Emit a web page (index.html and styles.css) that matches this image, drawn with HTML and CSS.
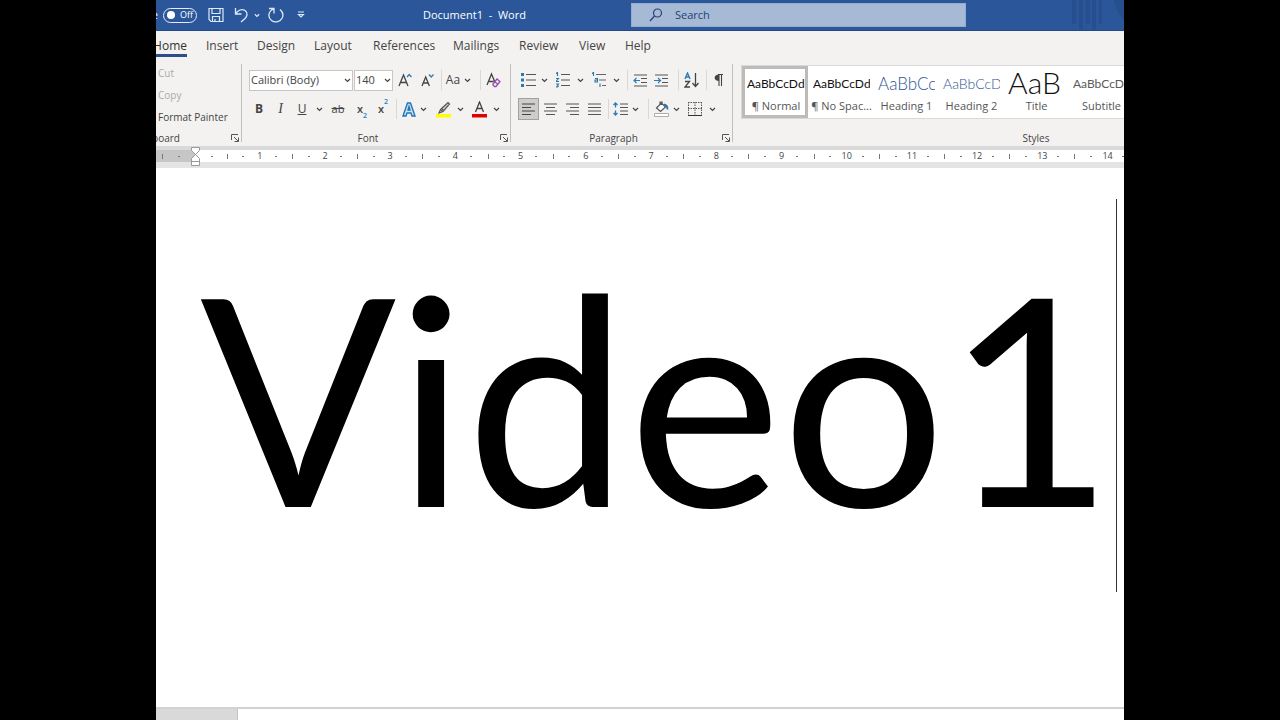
FILE: index.html
```html
<!DOCTYPE html>
<html lang="en">
<head>
<meta charset="utf-8">
<title>Document1 - Word</title>
<link rel="stylesheet" href="styles.css">
</head>
<body>
<svg class="defs" aria-hidden="true">
  <symbol id="chev" viewBox="0 0 7 5"><path d="M1 1l2.500 2.500L6 1" fill="none" stroke="#444" stroke-width="1.200"/></symbol>
  <symbol id="launch" viewBox="0 0 8 8"><path d="M.5 6V.5H7M3 3l4 4M7.500 3.500v4h-4" fill="none" stroke="#555"/></symbol>
</svg>
<div class="window">
  <header class="titlebar">
    <div class="quick">
      <label class="autosave" for="autosave">AutoSave</label>
      <button class="toggle" id="autosave" type="button"><span class="knob"></span>Off</button>
      <button class="icon" type="button" aria-label="Save"><svg width="16" height="16" viewBox="0 0 16 16"><path d="M1 1.500h14v13H3l-2-2zM4 1.500v5h8v-5M4.500 14.500v-5h7v5M7 12v2" fill="none" stroke="#dce9f8" stroke-width="1.200"/></svg></button>
      <button class="icon undo" type="button" aria-label="Undo"><svg width="15" height="16" viewBox="0 0 15 16"><path d="M1.500 1v6h6M1.500 7C4 3 8 1.500 11 3.500c3.500 2.500 2 6 0 8L7 15" fill="none" stroke="#dce9f8" stroke-width="1.300"/></svg></button>
      <button class="icon mini" type="button" aria-label="Undo list"><svg width="6" height="5" viewBox="0 0 7 5"><path d="M1 1l2.500 2.500L6 1" fill="none" stroke="#dce9f8" stroke-width="1.400"/></svg></button>
      <button class="icon redo" type="button" aria-label="Redo"><svg width="16" height="16" viewBox="0 0 16 16"><path d="M1 1.500h5v5M5.500 2C0 4.500-.5 10.500 3.500 13.500c4 3 9 .8 10.700-2.500 1.500-3.500.3-6.500-2.200-8.500" fill="none" stroke="#dce9f8" stroke-width="1.300"/></svg></button>
      <button class="icon" type="button" aria-label="Customize toolbar"><svg width="8" height="8" viewBox="0 0 8 8"><path d="M1 1h6M1.500 3.500L4 6l2.500-2.500z" fill="none" stroke="#dce9f8" stroke-width="1.100"/></svg></button>
    </div>
    <h1 class="title">Document1&nbsp; -&nbsp; Word</h1>
    <label class="search">
      <svg width="14" height="14" viewBox="0 0 14 14"><circle cx="8.500" cy="5" r="4" fill="none" stroke="#22437b" stroke-width="1.200"/><path d="M5.500 8L1 13" stroke="#22437b" stroke-width="1.300"/></svg>
      <input type="text" placeholder="Search" aria-label="Search">
    </label>
    <svg class="pattern" width="54" height="31" viewBox="0 0 54 31"><g fill="#234b88" opacity=".65"><path d="M2 0h4v24H2zM9 0h4v31H9zM16 0h4v24h-4zM22 0h4v31h-4zM29 0h3v24h-3zM44 0h10v21C50 17 46 9 44 0z"/></g></svg>
  </header>

  <nav class="tabs">
    <a class="active" href="#home">Home</a><a href="#insert">Insert</a><a href="#design">Design</a><a href="#layout">Layout</a><a href="#references">References</a><a href="#mailings">Mailings</a><a href="#review">Review</a><a href="#view">View</a><a href="#help">Help</a>
  </nav>

  <section class="ribbon">
    <div class="group clipboard">
      <div class="tools">
        <button type="button" disabled>Cut</button>
        <button type="button" disabled>Copy</button>
        <button type="button">Format Painter</button>
      </div>
      <div class="caption"><span>Clipboard</span></div>
      <button class="launcher" type="button" aria-label="Clipboard settings"><svg width="8" height="8"><use href="#launch"/></svg></button>
    </div>

    <div class="group font">
      <div class="tools">
        <div class="row row-a">
          <div class="combo"><select aria-label="Font"><option>Calibri (Body)</option></select><svg width="7" height="5"><use href="#chev"/></svg></div>
          <div class="combo"><select aria-label="Font size"><option>140</option></select><svg width="7" height="5"><use href="#chev"/></svg></div>
          <button type="button" aria-label="Grow font"><svg width="14" height="16" viewBox="0 0 14 16"><path d="M1 14L5.500 3 10 14M2.500 10.500h6" fill="none" stroke="#444" stroke-width="1.300"/><path d="M9 5l2.200-2.500L13.500 5" fill="none" stroke="#2b7cb8" stroke-width="1.300"/></svg></button>
          <button type="button" aria-label="Shrink font"><svg width="14" height="16" viewBox="0 0 14 16"><path d="M2 14l3.700-9 3.700 9M3.500 11h4.600" fill="none" stroke="#444" stroke-width="1.300"/><path d="M9 2.500L11.200 5l2.300-2.500" fill="none" stroke="#2b7cb8" stroke-width="1.300"/></svg></button>
          <i class="sep"></i>
          <button class="case" type="button">Aa<svg width="7" height="5"><use href="#chev"/></svg></button>
          <i class="sep"></i>
          <button type="button" aria-label="Clear formatting"><svg width="15" height="16" viewBox="0 0 15 16"><path d="M1 13L5.500 2l3.800 9M2.700 9.500h5" fill="none" stroke="#444" stroke-width="1.300"/><path d="M7 12l4-5 3 2.500-4 5H8.500L7 13zM9 10l3 2.500" fill="#f3f2f1" stroke="#9a4fb0" stroke-width="1.300"/></svg></button>
        </div>
        <div class="row row-b">
          <button class="bold" type="button">B</button>
          <button class="italic" type="button">I</button>
          <button class="under" type="button">U</button>
          <button type="button" aria-label="Underline styles"><svg width="7" height="5"><use href="#chev"/></svg></button>
          <button class="strike" type="button">ab</button>
          <button class="script" type="button">x<sub>2</sub></button>
          <button class="script" type="button">x<sup>2</sup></button>
          <i class="sep"></i>
          <button type="button" aria-label="Text effects"><svg width="14" height="15" viewBox="0 0 14 15"><path d="M1 14L5.500 1h3L13 14h-3l-1-3H5l-1 3zM6 8h2L7 4.500z" fill="#c9e3f6" stroke="#2474b5" stroke-width="1.400"/></svg></button>
          <button type="button" aria-label="Effects list"><svg width="7" height="5"><use href="#chev"/></svg></button>
          <button type="button" aria-label="Highlight"><svg width="15" height="17" viewBox="0 0 15 17"><path d="M3 12l1.500-3.500 2.500 2zM5.500 7.500L12 1.500l1.500 1.500L8 9.500z" fill="#ccc" stroke="#555" stroke-width="1.200"/><path d="M0 13h15v3.500H0z" fill="#ffff00"/></svg></button>
          <button type="button" aria-label="Highlight colors"><svg width="7" height="5"><use href="#chev"/></svg></button>
          <button type="button" aria-label="Font color"><svg width="15" height="17" viewBox="0 0 15 17"><path d="M3.500 11L7.500 1l4 10M5 7.500h5" fill="none" stroke="#444" stroke-width="1.300"/><path d="M0 13h15v3.500H0z" fill="#e00000"/></svg></button>
          <button type="button" aria-label="Font colors"><svg width="7" height="5"><use href="#chev"/></svg></button>
        </div>
      </div>
      <div class="caption"><span>Font</span></div>
      <button class="launcher" type="button" aria-label="Font settings"><svg width="8" height="8"><use href="#launch"/></svg></button>
    </div>

    <div class="group paragraph">
      <div class="tools">
        <div class="row row-c">
          <button type="button" aria-label="Bullets"><svg width="15" height="14" viewBox="0 0 15 14"><path d="M0 0h3v3H0zM0 5.500h3v3H0zM0 11h3v3H0z" fill="#2878a8"/><path d="M5 1.500h10M5 7h10M5 12.500h10" stroke="#555" stroke-width="1.200"/></svg></button>
          <button type="button" aria-label="Bullet styles"><svg width="7" height="5"><use href="#chev"/></svg></button>
          <button type="button" aria-label="Numbering"><svg width="15" height="16" viewBox="0 0 15 16"><path d="M0 1.500L1.500.5V4M0 6.500h2.500l-2.500 3h3M0 12h2.500L1.500 13.500c2 1-.5 2-1.500 1" fill="none" stroke="#2878a8" stroke-width="1.100"/><path d="M5 2.500h9M5 8h9M5 13.500h9" stroke="#555" stroke-width="1.200"/></svg></button>
          <button type="button" aria-label="Number styles"><svg width="7" height="5"><use href="#chev"/></svg></button>
          <button type="button" aria-label="Multilevel list"><svg width="15" height="16" viewBox="0 0 15 16"><path d="M0 1.500L1.500.5V4M3 6.500h2.500V10H3V8h2M8 11.500V15" fill="none" stroke="#2878a8" stroke-width="1.100"/><path d="M4 2.500h10M7 8h7M10 13.500h4" stroke="#666" stroke-width="1.200"/></svg></button>
          <button type="button" aria-label="List styles"><svg width="7" height="5"><use href="#chev"/></svg></button>
          <i class="sep"></i>
          <button type="button" aria-label="Decrease indent"><svg width="14" height="13" viewBox="0 0 14 13"><path d="M1 1h13M8 4.500h6M8 8.500h6M1 12h13" stroke="#555" stroke-width="1.200"/><path d="M7 6.500H1M3.500 4L1 6.500 3.500 9" fill="none" stroke="#2b7cb8" stroke-width="1.200"/></svg></button>
          <button type="button" aria-label="Increase indent"><svg width="14" height="13" viewBox="0 0 14 13"><path d="M1 1h13M8 4.500h6M8 8.500h6M1 12h13" stroke="#555" stroke-width="1.200"/><path d="M0 6.500h6.500M4 4l2.500 2.500L4 9" fill="none" stroke="#2b7cb8" stroke-width="1.200"/></svg></button>
          <i class="sep"></i>
          <button type="button" aria-label="Sort"><svg width="15" height="16" viewBox="0 0 15 16"><path d="M1 7l2.500-6L6 7M2 5h3" fill="none" stroke="#2b7cb8" stroke-width="1.400"/><path d="M1 9.500h4.500L1 15h5M11.500 1v13M8.500 11l3 3.500 3-3.500" fill="none" stroke="#444" stroke-width="1.300"/></svg></button>
          <i class="sep"></i>
          <button type="button" aria-label="Show marks"><svg width="9" height="12" viewBox="0 0 9 12"><path d="M4 .5h5M5 .5V12M7.500.5V12" fill="none" stroke="#444" stroke-width="1.100"/><path d="M5 .5v6.500C-.8 7-.8.500 5 .5z" fill="#444"/></svg></button>
        </div>
        <div class="row row-d">
          <button class="pressed" type="button" aria-label="Align left"><svg width="13" height="12" viewBox="0 0 13 12"><path d="M0 1h13M0 4.500h9M0 8h13M0 11.500h9" stroke="#444" stroke-width="1.200"/></svg></button>
          <button type="button" aria-label="Center"><svg width="13" height="12" viewBox="0 0 13 12"><path d="M0 1h13M2 4.500h9M0 8h13M2 11.500h9" stroke="#555" stroke-width="1.200"/></svg></button>
          <button type="button" aria-label="Align right"><svg width="13" height="12" viewBox="0 0 13 12"><path d="M0 1h13M4 4.500h9M0 8h13M4 11.500h9" stroke="#555" stroke-width="1.200"/></svg></button>
          <button type="button" aria-label="Justify"><svg width="13" height="12" viewBox="0 0 13 12"><path d="M0 1h13M0 4.500h13M0 8h13M0 11.500h13" stroke="#555" stroke-width="1.200"/></svg></button>
          <i class="sep"></i>
          <button type="button" aria-label="Line spacing"><svg width="15" height="14" viewBox="0 0 15 14"><path d="M7 2h8M7 5.500h8M7 9h8M7 12.500h8" stroke="#555" stroke-width="1.200"/><path d="M2.500 1v4.500M.5 3l2-2 2 2M2.500 8.500V13M.5 11l2 2 2-2" fill="none" stroke="#2b7cb8" stroke-width="1.300"/></svg></button>
          <button type="button" aria-label="Spacing options"><svg width="7" height="5"><use href="#chev"/></svg></button>
          <i class="sep"></i>
          <button type="button" aria-label="Shading"><svg width="15" height="16" viewBox="0 0 15 16"><path d="M2.500 7l5-5 4 4-5 4.500zM6 3V1h2v3" fill="#fff" stroke="#555" stroke-width="1.200"/><path d="M10 3.500c3 .5 3.500 3 3.500 5" fill="none" stroke="#2474b5" stroke-width="1.800"/><path d="M.5 12.500h14v3H.5z" fill="#fff" stroke="#999" stroke-width=".8"/></svg></button>
          <button type="button" aria-label="Shading colors"><svg width="7" height="5"><use href="#chev"/></svg></button>
          <button type="button" aria-label="Borders"><svg width="14" height="14" viewBox="0 0 14 14"><path d="M.5 0v13M13.500 0v13M7 0v13M0 .5h14M0 6.500h14" stroke="#555" stroke-dasharray="1.500 1"/><path d="M0 13.500h14" stroke="#333"/></svg></button>
          <button type="button" aria-label="Border options"><svg width="7" height="5"><use href="#chev"/></svg></button>
        </div>
      </div>
      <div class="caption"><span>Paragraph</span></div>
      <button class="launcher" type="button" aria-label="Paragraph settings"><svg width="8" height="8"><use href="#launch"/></svg></button>
    </div>

    <div class="group styles">
      <div class="gallery">
        <button class="style selected" type="button"><span class="sample">AaBbCcDd</span><span class="name">¶ Normal</span></button>
        <button class="style" type="button"><span class="sample">AaBbCcDd</span><span class="name">¶ No Spac...</span></button>
        <button class="style" type="button"><span class="sample h1">AaBbCc</span><span class="name">Heading 1</span></button>
        <button class="style" type="button"><span class="sample h2">AaBbCcDd</span><span class="name">Heading 2</span></button>
        <button class="style" type="button"><span class="sample display">AaB</span><span class="name">Title</span></button>
        <button class="style" type="button"><span class="sample sub">AaBbCcDd</span><span class="name">Subtitle</span></button>
      </div>
      <div class="caption"><span>Styles</span></div>
    </div>
  </section>

  <div class="ruler">
    <div class="margin"></div>
    <div class="scale">
      <span>1</span><span>2</span><span>3</span><span>4</span><span>5</span><span>6</span><span>7</span><span>8</span><span>9</span><span>10</span><span>11</span><span>12</span><span>13</span><span>14</span>
    </div>
    <svg class="indent" width="10" height="20" viewBox="0 0 10 20"><path d="M.5.500h8v3l-4 4-4-4zM.5 14.500v-3l4-4 4 4v3zM.5 14.500h8v4h-8z" fill="#fff" stroke="#999"/></svg>
  </div>

  <main class="page">
    <p class="line">Video1</p>
    <span class="caret"></span>
  </main>
  <footer class="next"><div class="gutter"></div></footer>
</div>
</body>
</html>
```
FILE: styles.css
```css
* { box-sizing: border-box; }
body {
  margin: 0;
  padding: 0 156px;
  background: #000;
  color: #444;
  font: 11px/16px "Open Sans", "Noto Sans", sans-serif;
}
button, input, select { font: inherit; color: inherit; border: 0; background: none; padding: 0; margin: 0; }
svg { display: block; flex: none; }
.defs { position: absolute; width: 0; height: 0; }
.window { display: flex; flex-direction: column; min-height: 100vh; background: #fff; overflow: hidden; }

.titlebar { display: flex; align-items: center; height: 31px; background: #2b579a; color: #fff; border-bottom: 1px solid #234a86; }
.quick { display: flex; align-items: center; width: 267px; }
.autosave { display: flex; justify-content: flex-end; width: 2px; overflow: hidden; margin-right: 5px; }
.toggle { display: flex; align-items: center; gap: 5px; width: 34px; height: 15px; padding-left: 3px; border: 1px solid #e4edf8; border-radius: 8px; font-size: 9px; line-height: 12px; margin-right: 11px; }
.knob { width: 8px; height: 8px; border-radius: 50%; background: #fff; }
.icon { flex: none; }
.undo { margin-left: 10px; }
.mini { margin-left: 5px; }
.redo { margin: 0 13px 0 8px; }
.title { margin: 0; width: 208px; font-size: 11px; font-weight: 400; line-height: 16px; padding-bottom: 1px; }
.search { display: flex; align-items: center; gap: 12px; width: 335px; height: 24px; padding-left: 17px; background: #a6b9d5; color: #22437b; border: 1px solid #91add4; }
.search input { flex: 1; min-width: 0; outline: 0; }
.search input::placeholder { color: #22437b; opacity: 1; }
.pattern { margin-left: auto; }

.tabs { display: grid; grid-template-columns: 50px 51px 57px 59px 80px 66px 60px 46px 40px; height: 30px; background: #f3f2f1; font-size: 12px; line-height: 29px; }
.tabs a { color: #444; text-decoration: none; }
.tabs .active { display: flex; justify-content: flex-end; width: 31px; height: 26px; color: #333; overflow: hidden; border-bottom: 3px solid #2b4f8a; }

.ribbon { display: flex; height: 85px; background: #f3f2f1; }
.group { position: relative; display: flex; flex-direction: column; flex: none; }
.group::after { content: ""; position: absolute; right: 0; top: 3px; bottom: 4px; width: 1px; background: #c2c0be; }
.tools { height: 69px; }
.caption { text-align: center; font-size: 10px; line-height: 16px; }
.launcher { position: absolute; right: 3px; bottom: 4px; }
.clipboard { width: 86px; }
.clipboard .tools { display: flex; flex-direction: column; align-items: flex-start; padding: 1px 0 0 2px; font-size: 10px; }
.clipboard .tools button { height: 22px; white-space: nowrap; }
.clipboard button:disabled { color: #aaa; }
.clipboard .caption { display: flex; justify-content: flex-end; width: 24px; overflow: hidden; }
.font { width: 269px; }
.font .caption { padding-right: 17px; }
.paragraph { width: 222px; }
.paragraph .caption { padding-right: 17px; }
.font .tools, .paragraph .tools { padding: 8px 0 0 7px; }
.row { display: grid; align-items: center; height: 22px; }
.row + .row { margin-top: 7px; }
.row button { display: flex; align-items: center; justify-content: center; height: 22px; min-width: 0; }
.row-a { grid-template-columns: 105px 40px 22px 22px 6px 29px 14px 12px; }
.row-b { grid-template-columns: 20px 23px 20px 14px 24px 24px 18px 8px 17px 12px 28px 6px 32px 2px; }
.row-c { grid-template-columns: 20px 12px 26px 8px 30px 4px 18px 8px 34px 1px 24px 6px 18px; }
.row-d { grid-template-columns: 21px 22px 22px 22px 6px 18px 12px 14px 13px 17px 20px 14px; }
.sep { justify-self: center; width: 1px; height: 20px; background: #dad8d6; }
.combo { display: flex; align-items: center; height: 21px; margin-right: 1px; padding: 0 1px; background: #fff; border: 1px solid #c8c6c4; }
.combo select { appearance: none; flex: 1; min-width: 0; outline: 0; }
.case { gap: 4px; font-size: 12px; }
.bold { font-size: 12px; font-weight: 700; }
.italic { font: italic 14px "Liberation Serif", serif; }
.under { font-size: 12px; text-decoration: underline; }
.strike { text-decoration: line-through; }
.script { font-weight: 600; }
.script sub, .script sup { font-size: 7px; line-height: 8px; color: #2b7cb8; }
.script sub { align-self: flex-end; }
.script sup { align-self: flex-start; }
.row .pressed { background: #cfcdcb; border: 1px solid #a3a19f; }

.styles { width: 606px; padding-left: 8px; }
.gallery { display: flex; height: 54px; margin: 4px 0 11px; background: #fff; border: 1px solid #dad8d6; }
.style { display: flex; flex-direction: column; align-items: center; flex: none; width: 65px; height: 52px; padding: 5px 3px 0 5px; }
.style.selected { width: 66px; outline: 3px solid #bdbbb9; outline-offset: -3px; }
.sample { display: flex; align-items: center; width: 100%; height: 26px; overflow: hidden; font: 12px/26px Lato, sans-serif; color: #111; white-space: nowrap; }
.sample.h1 { font-size: 17px; font-weight: 300; color: #2f5496; }
.sample.h2 { font-size: 14px; font-weight: 300; color: #2f5496; }
.sample.display { align-items: flex-end; font-size: 30px; line-height: 30px; font-weight: 300; }
.sample.sub { color: #5a5a5a; }
.name { color: #555; font-size: 11px; line-height: 18px; white-space: nowrap; }
.styles .caption { padding-right: 8px; }

.ruler { position: relative; display: flex; height: 22px; border-top: 4px solid #d9d9d9; border-bottom: 6px solid #e4e4e4; background: #fff; }
.margin {
  flex: none; width: 40px;
  background: linear-gradient(#777, #777) 6px 4px / 1px 5px no-repeat, linear-gradient(#777, #777) 22px 6px / 2px 1px no-repeat, #c6c6c6;
}
.scale { display: grid; grid-template-columns: repeat(14, 1fr); flex: none; width: 936px; padding-left: 23px; background: linear-gradient(#777, #777) 15px 6px / 2px 1px no-repeat; }
.scale span {
  padding-left: 25%; text-align: center; font-size: 9px; line-height: 12px;
  background: linear-gradient(#777, #777) 12% 4px / 1px 5px no-repeat, linear-gradient(#777, #777) 37% 6px / 2px 1px no-repeat, linear-gradient(#777, #777) 88% 6px / 2px 1px no-repeat;
}
.indent { position: absolute; left: 35px; top: -3px; }

.page { display: flex; align-items: flex-start; flex: 1; padding: 31px 7px 0 44px; }
.line { margin: 0; flex: 1; min-width: 0; font: 290px/393px Lato, sans-serif; color: #000; white-space: nowrap; }
.caret { flex: none; width: 1px; height: 393px; background: #333; }
.next { height: 13px; border-top: 2px solid #d2d2d2; }
.gutter { width: 82px; height: 11px; background: #d9d9d9; border-right: 1px solid #c4c4c4; }
```
